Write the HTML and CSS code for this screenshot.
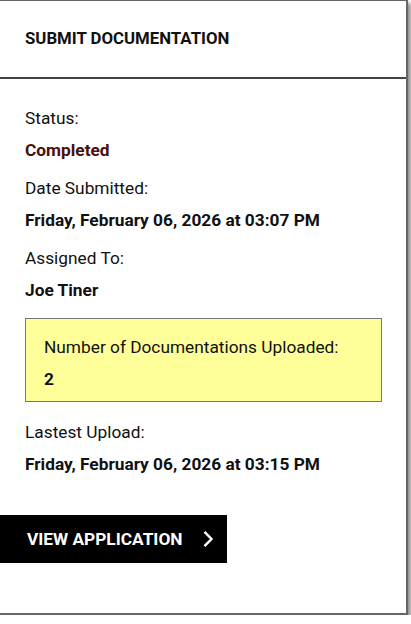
FILE: index.html
```html
<!DOCTYPE html>
<html lang="en">
<head>
    <meta charset="UTF-8">
    <meta name="viewport" content="width=device-width, initial-scale=1.0">
    <title>Submit Documentation</title>
    <link rel="stylesheet" href="styles.css">
</head>
<body>
    <div class="doc-card">
        <div class="doc-card-header">
            <h2>SUBMIT DOCUMENTATION</h2>
        </div>
        <div class="doc-card-body">
            <div class="field">
                <p class="label">Status:</p>
                <p class="value status-completed">Completed</p>
            </div>
            <div class="field">
                <p class="label">Date Submitted:</p>
                <p class="value">Friday, February 06, 2026 at 03:07 PM</p>
            </div>
            <div class="field">
                <p class="label">Assigned To:</p>
                <p class="value">Joe Tiner</p>
            </div>
            <div class="upload-count">
                <p class="label">Number of Documentations Uploaded:</p>
                <p class="value">2</p>
            </div>
            <div class="field">
                <p class="label">Lastest Upload:</p>
                <p class="value">Friday, February 06, 2026 at 03:15 PM</p>
            </div>
        </div>
        <a class="view-btn" href="#">
            VIEW APPLICATION
            <svg width="12" height="18" viewBox="0 0 12 18"><path d="M2.5 1.8l7 7.2-7 7.2" fill="none" stroke="#fff" stroke-width="2.4"/></svg>
        </a>
    </div>
</body>
</html>
```

FILE: styles.css
```css
body {
    font-family: Roboto, "Liberation Sans", sans-serif;
    background-color: #fff;
    color: #111;
    margin: 0;
}
.doc-card {
    width: 409px;
    height: 615px;
    box-sizing: border-box;
    margin-left: -1px;
    border: 1px solid #666;
    border-right-width: 2px;
    border-bottom-width: 2px;
    box-shadow: 3px 3px 4px rgba(0, 0, 0, 0.45);
    background-color: #fff;
}
.doc-card-header {
    height: 76px;
    border-bottom: 2px solid #444;
    display: flex;
    align-items: center;
    padding-left: 25px;
}
.doc-card-header h2 {
    margin: 0;
    font-size: 16.8px;
    font-weight: 700;
    padding-bottom: 2px;
}
.doc-card-body {
    padding: 29px 24px 0 25px;
}
p {
    margin: 0;
}
.label {
    font-size: 17.3px;
    line-height: 20px;
}
.value {
    font-size: 17.3px;
    font-weight: 700;
    line-height: 20px;
    margin-top: 12px;
}
.field {
    margin-bottom: 18px;
}
.status-completed {
    color: #4a0f0f;
}
.upload-count {
    background-color: #ffff99;
    border: 1px solid #777;
    margin-top: 1px;
    padding: 18px 18px 12px 18px;
    margin-bottom: 20px;
}
.view-btn {
    display: inline-flex;
    align-items: center;
    gap: 19px;
    height: 48px;
    width: 227px;
    box-sizing: border-box;
    margin-top: 23px;
    padding-left: 27px;
    background-color: #000;
    color: #fff;
    font-size: 17.3px;
    font-weight: 700;
    text-decoration: none;
}
```
